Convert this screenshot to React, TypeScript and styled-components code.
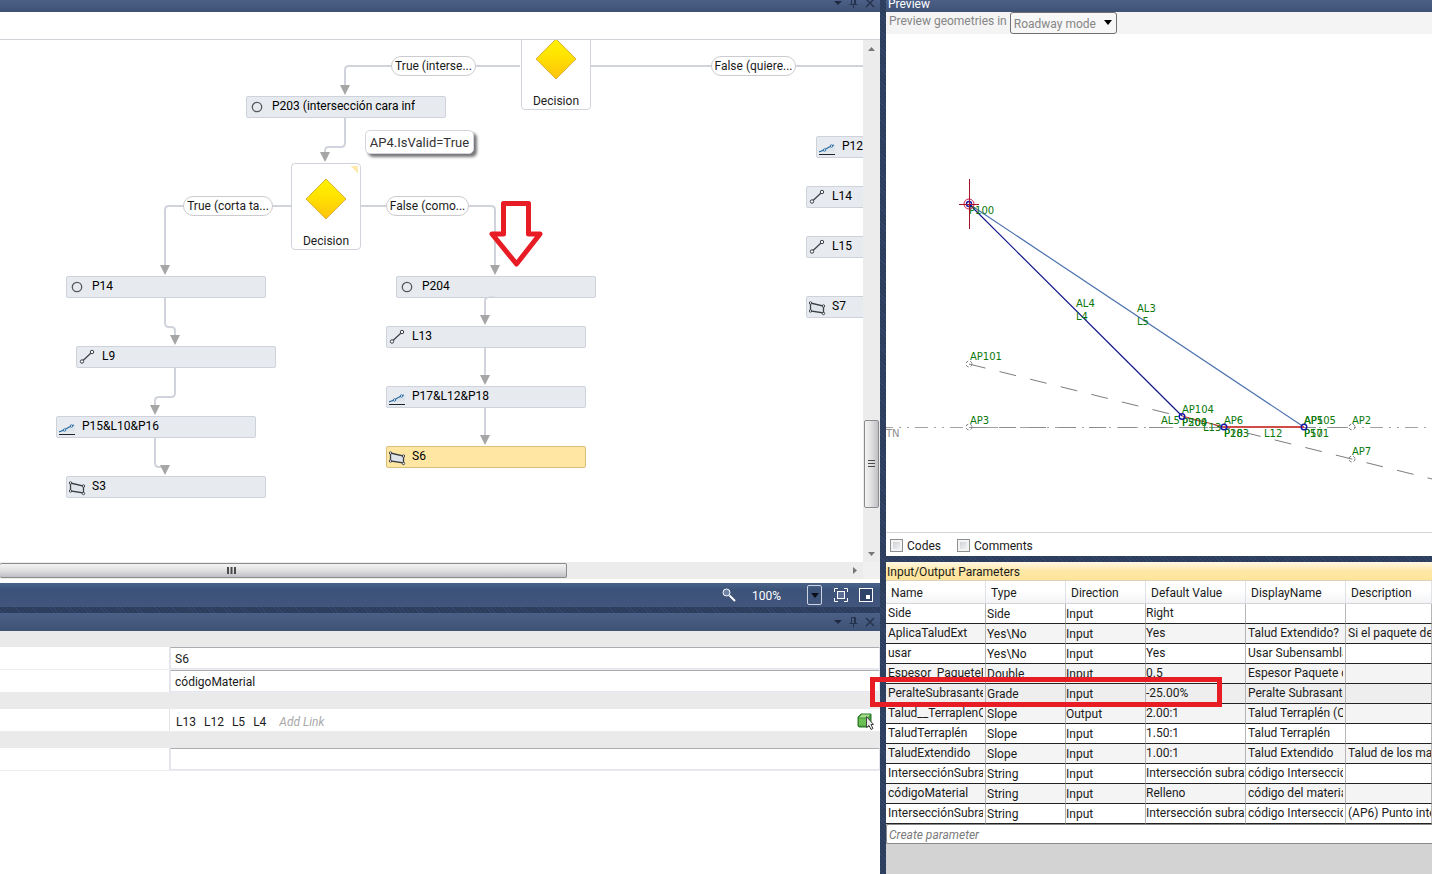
import React from "react";
import styled, { createGlobalStyle, css } from "styled-components";

const Global = createGlobalStyle`
  * { box-sizing: border-box; }
  body {
    margin: 0;
    background: #fff;
    color: #1b1b1b;
    font-family: Roboto, "Open Sans", sans-serif;
    font-size: 12px;
    line-height: 16px;
  }
  button, input, select { font: inherit; color: inherit; }
  button { border: 0; padding: 0; background: none; }
  svg { display: block; }
`;

const hatch = css`
  background: repeating-linear-gradient(45deg, #2c3d5b 0 2px, #33456a 2px 3px);
`;

const Workspace = styled.div`
  display: grid;
  grid-template-columns: minmax(0, 880fr) 6px minmax(0, 546fr);
  min-height: 100vh;
  overflow: hidden;
`;
const Column = styled.section`
  display: flex;
  flex-direction: column;
  min-width: 0;
`;
const VSplitter = styled.div`
  ${hatch}
`;
const HSplitter = styled.div`
  ${hatch}
  height: 6px;
`;

/* ---------- panel title bars ---------- */

const TitleBar = styled.header<{ $short?: boolean }>`
  display: flex;
  align-items: flex-end;
  height: ${(p) => (p.$short ? 12 : 18)}px;
  overflow: hidden;
  color: #fff;
  background: linear-gradient(#4c5f86, #3e5275);
`;
const TitleText = styled.h2`
  flex: 1;
  margin: 0;
  padding: 0 2px;
  font-size: 12px;
  line-height: 16px;
  font-weight: 400;
`;
const TitleButtons = styled.div`
  display: flex;
  align-items: center;
  gap: 4px;
  height: 18px;
  padding-right: 4px;
`;

function PanelTitle({ text = "", short, tools = true }: { text?: string; short?: boolean; tools?: boolean }) {
  return (
    <TitleBar $short={short}>
      <TitleText>{text}</TitleText>
      {tools && (
        <TitleButtons>
          <button aria-label="Window menu">
            <svg width="12" height="12"><path d="M2 4h8l-4 4z" fill="#1f2a40" /></svg>
          </button>
          <button aria-label="Pin">
            <svg width="12" height="12" fill="none" stroke="#26334e"><path d="M3.500 1.500h4v6h-4zM6.500 1.500v6M1.500 7.500h8M5.500 7.500v4" /></svg>
          </button>
          <button aria-label="Close">
            <svg width="12" height="12" fill="none" stroke="#26334e" strokeWidth="1.500"><path d="M2 2l8 8M10 2l-8 8" /></svg>
          </button>
        </TitleButtons>
      )}
    </TitleBar>
  );
}

/* ---------- flow chart ---------- */

const ToolStrip = styled.div`
  height: 28px;
  border-bottom: 1px solid #d0d3d8;
`;
const FlowArea = styled.div`
  display: flex;
  height: 522px;
`;
const Canvas = styled.div`
  position: relative;
  flex: 1;
  overflow: hidden;
  background: #fff;
`;
const Wires = styled.svg`
  position: absolute;
  inset: 0;
  width: 100%;
  height: 100%;
`;
const NodeBox = styled.div<{ $x: number; $y: number; $active?: boolean }>`
  position: absolute;
  left: ${(p) => p.$x}px;
  top: ${(p) => p.$y}px;
  display: flex;
  width: 200px;
  height: 22px;
  padding-left: 2px;
  border: 1px solid ${(p) => (p.$active ? "#d9c07a" : "#cdd2db")};
  border-radius: 2px;
  background: ${(p) => (p.$active ? "#ffe6a2" : "#e7ebef")};
  color: #000;
`;
const NodeLabel = styled.span`
  width: 143px;
  margin-left: 6px;
  line-height: 18px;
  white-space: nowrap;
  overflow: hidden;
`;
const DecisionBox = styled.div<{ $x: number; $y: number }>`
  position: absolute;
  left: ${(p) => p.$x}px;
  top: ${(p) => p.$y}px;
  display: flex;
  flex-direction: column;
  align-items: center;
  width: 70px;
  height: 87px;
  padding-top: 14px;
  border: 1px solid #d0d3da;
  border-radius: 4px;
  background: #fff;
`;
const DecisionLabel = styled.span`
  margin-top: 14px;
`;
const Notch = styled.span`
  position: absolute;
  top: 2px;
  right: 2px;
  width: 8px;
  height: 8px;
  background: linear-gradient(45deg, transparent 50%, #ffe9ac 50%);
`;
const Pill = styled.span<{ $x: number; $y: number; $w: number }>`
  position: absolute;
  left: ${(p) => p.$x}px;
  top: ${(p) => p.$y}px;
  width: ${(p) => p.$w}px;
  height: 20px;
  border: 1px solid #cbcbd0;
  border-radius: 10px;
  background: #fff;
  line-height: 18px;
  text-align: center;
  white-space: nowrap;
`;
const Tip = styled.div`
  position: absolute;
  left: 365px;
  top: 90px;
  width: 109px;
  height: 24px;
  border: 1px solid #d3d6de;
  border-radius: 5px;
  background: #fff;
  box-shadow: 3px 3px 3px #777;
  font-size: 13px;
  line-height: 24px;
  text-align: center;
  color: #333;
`;
const RedArrow = styled.svg`
  position: absolute;
  left: 486px;
  top: 159px;
`;

type Kind = "point" | "link" | "surface" | "shape";

function KindIcon({ kind }: { kind: Kind }) {
  return (
    <svg width="17" height="20" fill="none" stroke="#3b3f46">
      {kind === "point" && <circle cx="8" cy="10" r="4.700" strokeWidth="1.300" stroke="#55585d" />}
      {kind === "link" && (
        <>
          <path d="M4 13.500L12 6" strokeWidth="1.200" />
          <circle cx="3" cy="14.500" r="1.700" fill="#fff" />
          <circle cx="13" cy="5" r="1.700" fill="#fff" />
        </>
      )}
      {kind === "surface" && (
        <>
          <path d="M0 15L12 8h4v6l-8 1z" fill="#dbe4ec" stroke="none" />
          <path d="M0 15l5-2 7-4 3-1" stroke="#2b6ca3" strokeWidth="1.300" />
          <circle cx="5.500" cy="13" r="1.200" fill="#fff" stroke="#2b6ca3" />
          <circle cx="12.500" cy="9" r="1.200" fill="#fff" stroke="#2b6ca3" />
          <path d="M0 17.500h16" stroke="#20242c" />
        </>
      )}
      {kind === "shape" && (
        <>
          <path d="M1.500 6L14.500 9L14.500 16L1.500 14z" fill="#dfe3ea" strokeWidth="1.300" />
          <g fill="#fff">
            <circle cx="1.500" cy="6" r="1.200" />
            <circle cx="14.500" cy="9" r="1.200" />
            <circle cx="14.500" cy="16.500" r="1.200" />
            <circle cx="1.500" cy="14" r="1.200" />
          </g>
        </>
      )}
    </svg>
  );
}

const nodes: { x: number; y: number; kind: Kind; label: string; active?: boolean }[] = [
  { x: 246, y: 56, kind: "point", label: "P203 (intersección cara inferior)" },
  { x: 66, y: 236, kind: "point", label: "P14" },
  { x: 76, y: 306, kind: "link", label: "L9" },
  { x: 56, y: 376, kind: "surface", label: "P15&L10&P16" },
  { x: 66, y: 436, kind: "shape", label: "S3" },
  { x: 396, y: 236, kind: "point", label: "P204" },
  { x: 386, y: 286, kind: "link", label: "L13" },
  { x: 386, y: 346, kind: "surface", label: "P17&L12&P18" },
  { x: 386, y: 406, kind: "shape", label: "S6", active: true },
  { x: 816, y: 96, kind: "surface", label: "P12&L8&P13" },
  { x: 806, y: 146, kind: "link", label: "L14" },
  { x: 806, y: 196, kind: "link", label: "L15" },
  { x: 806, y: 256, kind: "shape", label: "S7" },
];

const wires = [
  "M392 26H349Q345 26 345 30V46",
  "M475 26H520",
  "M591 26H880",
  "M345 78V103Q345 107 341 107H329Q325 107 325 111V113",
  "M291 166H169Q165 166 165 170V226",
  "M361 166H491Q495 166 495 170V226",
  "M165 258V283Q165 287 169 287H171Q175 287 175 291V296",
  "M175 328V353Q175 357 171 357H159Q155 357 155 361V366",
  "M155 398V423Q155 427 159 427H162",
  "M495 257H489Q485 257 485 261V276",
  "M485 308V336",
  "M485 368V396",
];
const heads = [
  [345, 55], [325, 122], [165, 235], [495, 235], [175, 305],
  [155, 375], [165, 435], [485, 285], [485, 345], [485, 405],
];

function Decision({ x, y, noted }: { x: number; y: number; noted?: boolean }) {
  return (
    <DecisionBox $x={x} $y={y}>
      <svg width="42" height="42">
        <defs>
          <linearGradient id="gold" x1="0" y1="0" x2="0" y2="1">
            <stop offset="0" stopColor="#fff200" />
            <stop offset="0.400" stopColor="#ffe400" />
            <stop offset="1" stopColor="#ffc20e" />
          </linearGradient>
        </defs>
        <path d="M21 1L41 21L21 41L1 21z" fill="url(#gold)" stroke="#e0b13a" />
      </svg>
      <DecisionLabel>Decision</DecisionLabel>
      {noted && <Notch />}
    </DecisionBox>
  );
}

function FlowCanvas() {
  return (
    <Canvas>
      <Wires>
        <g fill="none" stroke="#d0d3dc" strokeWidth="2">
          {wires.map((d) => <path key={d} d={d} />)}
        </g>
        <g fill="#a6a6a6">
          {heads.map(([x, y]) => <path key={`${x}-${y}`} d={`M${x - 5} ${y - 10}h10l-5 10z`} />)}
        </g>
      </Wires>
      <Decision x={521} y={-17} />
      <Decision x={291} y={123} noted />
      <Pill $x={391} $y={16} $w={85}>True (interse...</Pill>
      <Pill $x={711} $y={16} $w={85}>False (quiere...</Pill>
      <Pill $x={183} $y={156} $w={90}>True (corta ta...</Pill>
      <Pill $x={386} $y={156} $w={83}>False (como...</Pill>
      {nodes.map((n) => (
        <NodeBox key={n.label} $x={n.x} $y={n.y} $active={n.active}>
          <KindIcon kind={n.kind} />
          <NodeLabel>{n.label}</NodeLabel>
        </NodeBox>
      ))}
      <Wires>
        <path d="M495 257H489Q485 257 485 261" fill="none" stroke="#cfd3da" />
      </Wires>
      <Tip>AP4.IsValid=True</Tip>
      <RedArrow width="62" height="72">
        <path d="M17.500 4.500H42.500V35H54L30.500 65L6 35H17.500z" fill="#fff" stroke="#e81c24" strokeWidth="5" strokeLinejoin="round" />
      </RedArrow>
    </Canvas>
  );
}

/* ---------- scroll bars ---------- */

const VTrack = styled.div`
  display: flex;
  flex-direction: column;
  width: 17px;
  background: #ececec;
`;
const HTrack = styled.div`
  display: flex;
  height: 17px;
  margin-bottom: 4px;
  background: #ececec;
`;
const ScrollButton = styled.button`
  display: grid;
  place-items: center;
  width: 17px;
  height: 17px;
`;
const Gap = styled.div<{ $grow: number }>`
  flex: ${(p) => p.$grow} 1 0;
`;
const Thumb = styled.div<{ $vertical?: boolean }>`
  display: grid;
  place-items: center;
  border: 1px solid #8b8b8f;
  border-radius: 2px;
  ${(p) =>
    p.$vertical
      ? css`height: 88px; margin: 0 1px; background: linear-gradient(90deg, #f3f3f3, #e2e2e3 45%, #bfc0c4);`
      : css`flex: 462 1 0; margin: 1px 0; padding-right: 104px; border-left: 0; background: linear-gradient(#f3f3f3, #e2e2e3 45%, #bfc0c4);`}
`;
const Corner = styled.div`
  width: 17px;
  background: #f0f0f0;
`;

/* ---------- zoom bar ---------- */

const ZoomBar = styled.div`
  display: flex;
  align-items: center;
  justify-content: flex-end;
  height: 24px;
  padding-right: 6px;
  color: #fff;
  background: linear-gradient(#48638a, #3c5379 30%, #42557c);
`;
const ZoomPicker = styled.label`
  position: relative;
  display: block;
  width: 70px;
  height: 22px;
  margin: 0 2px 0 16px;
`;
const ZoomSelect = styled.select`
  appearance: none;
  width: 100%;
  height: 24px;
  padding: 0;
  border: 0;
  background: transparent;
`;
const ZoomDrop = styled.span`
  position: absolute;
  top: 1px;
  right: 0;
  display: grid;
  place-items: center;
  width: 15px;
  height: 20px;
  border: 1px solid #cdd5e3;
  border-radius: 2px;
  pointer-events: none;
`;
const ZoomButton = styled.button`
  margin-left: 10px;
`;

/* ---------- property grid ---------- */

const Properties = styled.div`
  flex: 1;
`;
const Category = styled.div`
  height: 16px;
  background: #eaeaea;
`;
const PropertyRow = styled.div`
  display: flex;
  height: 23px;
  border-bottom: 1px solid #ececf0;
`;
const PropertyName = styled.div`
  width: 170px;
  border-right: 1px solid #e4e4e8;
`;
const PropertyInput = styled.input`
  flex: 1;
  min-width: 0;
  padding: 2px 4px 0;
  border: 1px solid #e3e6ee;
  border-top-color: #abadb3;
  border-radius: 1px;
  outline: 0;
`;
const LinkList = styled.div`
  display: flex;
  flex: 1;
  align-items: center;
  gap: 8px;
  padding: 4px 6px 0;
`;
const AddLink = styled.button`
  margin-left: 5px;
  color: #a9a9a9;
  font-style: italic;
`;
const PickButton = styled.button`
  margin-left: auto;
`;

/* ---------- preview ---------- */

const PreviewTools = styled.div`
  display: flex;
  gap: 3px;
  height: 22px;
  padding-left: 3px;
  background: #f4f4f4;
  color: #868686;
`;
const PreviewLabel = styled.label`
  line-height: 18px;
`;
const ModePicker = styled.span`
  position: relative;
`;
const ModeSelect = styled.select`
  appearance: none;
  width: 107px;
  height: 22px;
  padding: 1px 3px 0;
  border: 1px solid #707070;
  border-radius: 3px;
  background: #f7f7f7;
`;
const ModeArrow = styled.svg`
  position: absolute;
  top: 8px;
  right: 5px;
  pointer-events: none;
`;
const PreviewCanvas = styled.div`
  height: 498px;
  overflow: hidden;
`;
const Drawing = styled.svg`
  width: 100%;
  height: 498px;
  font-family: "DejaVu Sans", sans-serif;
  font-size: 10px;
`;
const CheckBar = styled.div`
  display: flex;
  align-items: center;
  gap: 16px;
  height: 24px;
  padding-top: 2px;
  padding-left: 4px;
  border-top: 1px solid #d3d5d8;
`;
const CheckLabel = styled.label`
  display: flex;
  align-items: center;
  gap: 4px;
`;
const Check = styled.input`
  appearance: none;
  width: 13px;
  height: 13px;
  margin: 0;
  border: 1px solid #8e8f8f;
  background: linear-gradient(135deg, #c4c9d0, #fafafa);
  box-shadow: inset 0 0 0 2px #f4f4f4;
`;

const tags: [number, number, string][] = [
  [83, 180, "P100"],
  [190, 273, "AL4"],
  [190, 286, "L4"],
  [251, 278, "AL3"],
  [251, 291, "L5"],
  [84, 326, "AP101"],
  [84, 390, "AP3"],
  [296, 379, "AP104"],
  [275, 390, "AL5"],
  [296, 392, "P204"],
  [296, 392, "P500"],
  [317, 397, "L13"],
  [338, 390, "AP6"],
  [338, 403, "P18"],
  [338, 403, "P203"],
  [378, 403, "L12"],
  [418, 390, "AP5"],
  [418, 390, "AP105"],
  [418, 403, "P17"],
  [418, 403, "P501"],
  [466, 390, "AP2"],
  [466, 421, "AP7"],
];

function PreviewDrawing() {
  return (
    <Drawing>
      <g fill="none">
        <path d="M0 393.500H1400" stroke="#a2a2a2" strokeDasharray="13 6 2 6 2 6" strokeDashoffset="6" />
        <path d="M83 393.500H466" stroke="#8c8c8c" strokeDasharray="17 13" />
        <path d="M83 330L1400 657" stroke="#7d7d7d" strokeDasharray="17 14.500" />
        <g stroke="#7d7d7d" strokeDasharray="3 2">
          <circle cx="83" cy="330" r="3" />
          <circle cx="83" cy="393" r="3" />
          <circle cx="466" cy="393" r="3" />
          <circle cx="466" cy="425" r="3" />
        </g>
        <path d="M83 170L418 393" stroke="#4a6fae" strokeWidth="1.200" />
        <path d="M83 170L296 382" stroke="#14148c" strokeWidth="1.200" />
        <path d="M296 382L338 393" stroke="#c03a30" />
        <path d="M338 393H418" stroke="#d24b4b" strokeWidth="2" />
      </g>
      <g fill="#0c780c">
        {tags.map(([x, y, t]) => <text key={`${x}-${t}`} x={x} y={y}>{t}</text>)}
      </g>
      <text x="0" y="403" fill="#8e8e8e">TN</text>
      <g fill="none" stroke="#1414a8" strokeWidth="1.400">
        <circle cx="296" cy="382.500" r="2.800" />
        <circle cx="338" cy="393" r="2.800" />
        <circle cx="418" cy="393" r="2.800" />
        <circle cx="83" cy="170" r="2.500" />
      </g>
      <g fill="none" stroke="#a81428">
        <circle cx="83" cy="170" r="5" stroke="#d0204c" />
        <path d="M83.500 145V195M73 170.500H93" />
      </g>
    </Drawing>
  );
}

/* ---------- parameters ---------- */

const Parameters = styled.div`
  position: relative;
  flex: 1;
  background: #d3d3d3;
`;
const ParametersTitle = styled.h2`
  height: 19px;
  margin: 0;
  padding: 0 1px;
  border-bottom: 1px solid #d8d2bd;
  background: linear-gradient(#fff8e4, #ffe8a6 50%, #ffe49a);
  font-size: 12px;
  line-height: 20px;
  font-weight: 400;
`;
const Clip = styled.div`
  overflow: hidden;
`;
const Table = styled.table`
  width: 100%;
  table-layout: fixed;
  border-collapse: separate;
  border-spacing: 0;
  background: #fff;
`;
const HeadCell = styled.th<{ $w?: number }>`
  width: ${(p) => (p.$w ? `${p.$w}px` : "auto")};
  height: 23px;
  padding: 2px 5px 0;
  border-right: 1px solid #dfe2e6;
  border-bottom: 1px solid #d5d5d5;
  background: linear-gradient(#fff 45%, #f3f4f6);
  font-weight: 400;
  text-align: left;
  white-space: nowrap;
`;
const Row = styled.tr<{ $shade: string }>`
  background: ${(p) => p.$shade};
`;
const Cell = styled.td<{ $pad: string }>`
  height: 20px;
  padding: ${(p) => p.$pad};
  border-right: 1px solid #b5b5b5;
  border-bottom: 1px solid #222;
`;
const CellText = styled.div`
  height: 18px;
  line-height: 18px;
  overflow: hidden;
  white-space: nowrap;
`;
const CreateInput = styled.input`
  display: block;
  width: 100%;
  height: 20px;
  padding: 2px 2px 0;
  border: 1px solid #8a8a8a;
  border-right: 0;
  border-radius: 2px 0 0 2px;
  background: #fff;
  font-style: italic;
  &::placeholder { color: #7b7b7b; opacity: 1; }
`;
const Highlight = styled.div`
  position: absolute;
  left: -16px;
  top: 115px;
  width: 352px;
  height: 30px;
  border: 5px solid #e81c24;
  pointer-events: none;
`;

const columns: { title: string; w?: number; pad: string }[] = [
  { title: "Name", w: 100, pad: "0 2px 1px 2px" },
  { title: "Type", w: 80, pad: "1px 0 0 1px" },
  { title: "Direction", w: 80, pad: "1px 0 0 0" },
  { title: "Default Value", w: 100, pad: "0 0 1px 0" },
  { title: "DisplayName", w: 100, pad: "0 2px 1px 2px" },
  { title: "Description", pad: "0 0 1px 2px" },
];
const params = [
  ["Side", "Side", "Input", "Right", "", ""],
  ["AplicaTaludExt", "Yes\\No", "Input", "Yes", "Talud Extendido?", "Si el paquete de firmes"],
  ["usar", "Yes\\No", "Input", "Yes", "Usar Subensamblaje", ""],
  ["Espesor_PaqueteFirme", "Double", "Input", "0.5", "Espesor Paquete de", ""],
  ["PeralteSubrasante", "Grade", "Input", "-25.00%", "Peralte Subrasante", ""],
  ["Talud__TerraplenOut", "Slope", "Output", "2.00:1", "Talud Terraplén (Out)", ""],
  ["TaludTerraplén", "Slope", "Input", "1.50:1", "Talud Terraplén", ""],
  ["TaludExtendido", "Slope", "Input", "1.00:1", "Talud Extendido", "Talud de los materiales"],
  ["IntersecciónSubrasante", "String", "Input", "Intersección subrasante", "código Intersección", ""],
  ["códigoMaterial", "String", "Input", "Relleno", "código del material", ""],
  ["IntersecciónSubrasante", "String", "Input", "Intersección subrasante", "código Intersección", "(AP6) Punto intersección"],
];

export default function App() {
  return (
    <>
      <Global />
      <Workspace>
        <Column>
          <PanelTitle short />
          <ToolStrip />
          <FlowArea>
            <FlowCanvas />
            <VTrack>
              <ScrollButton aria-label="Scroll up"><svg width="7" height="4"><path d="M0 4h7L3.500 0z" fill="#777" /></svg></ScrollButton>
              <Gap $grow={362} />
              <Thumb $vertical><svg width="7" height="9" stroke="#4a4a4a"><path d="M0 1.500h7M0 4.500h7M0 7.500h7" /></svg></Thumb>
              <Gap $grow={37} />
              <ScrollButton aria-label="Scroll down"><svg width="7" height="4"><path d="M0 0h7L3.500 4z" fill="#777" /></svg></ScrollButton>
            </VTrack>
          </FlowArea>
          <HTrack>
            <Thumb><svg width="9" height="7" stroke="#4a4a4a" strokeWidth="2"><path d="M1 0v7M4.500 0v7M8 0v7" /></svg></Thumb>
            <Gap $grow={279} />
            <ScrollButton aria-label="Scroll right"><svg width="4" height="7"><path d="M0 0v7L4 3.500z" fill="#777" /></svg></ScrollButton>
            <Corner />
          </HTrack>
          <ZoomBar>
            <ZoomButton aria-label="Zoom">
              <svg width="14" height="14" fill="none" stroke="#fff">
                <circle cx="4.500" cy="4.500" r="3.500" fill="#6d83a8" />
                <path d="M7.500 7.500L13 13" strokeWidth="2" />
              </svg>
            </ZoomButton>
            <ZoomPicker>
              <ZoomSelect aria-label="Zoom level"><option>100%</option></ZoomSelect>
              <ZoomDrop><svg width="8" height="5"><path d="M0 0h8L4 5z" fill="#0c0f18" /></svg></ZoomDrop>
            </ZoomPicker>
            <ZoomButton aria-label="Fit to window">
              <svg width="14" height="14" fill="none" stroke="#fff">
                <rect x="3.500" y="3.500" width="7" height="7" fill="#5b6f96" />
                <path d="M0.500 4V0.500H4M10 0.500h3.500V4M13.500 10v3.500H10M4 13.500H0.500V10" />
              </svg>
            </ZoomButton>
            <ZoomButton aria-label="Overview">
              <svg width="16" height="14">
                <rect x="1.500" y="0.500" width="13" height="13" fill="#2f4268" stroke="#fff" />
                <rect x="8" y="7" width="4" height="4" fill="#fff" />
              </svg>
            </ZoomButton>
          </ZoomBar>
          <HSplitter />
          <PanelTitle />
          <Properties>
            <Category />
            <PropertyRow><PropertyName /><PropertyInput aria-label="Name" defaultValue="S6" /></PropertyRow>
            <PropertyRow><PropertyName /><PropertyInput aria-label="Codes" defaultValue="códigoMaterial" /></PropertyRow>
            <Category />
            <PropertyRow>
              <PropertyName />
              <LinkList>
                <span>L13</span><span>L12</span><span>L5</span><span>L4</span>
                <AddLink>Add Link</AddLink>
                <PickButton aria-label="Pick links">
                  <svg width="17" height="18">
                    <path d="M1 4l3-3h10v9l-3 4H2l-1-1z" fill="#3f9a35" stroke="#2d7527" />
                    <path d="M2 4.500l3-3h8l-2 3z" fill="#a5dc8b" />
                    <path d="M2 5.500h8v7H2z" fill="#6cbf55" />
                    <path d="M9.500 3.500v11l2.500-2 2 4 2-1-2-4h2.500z" fill="#e8e8ea" stroke="#444" />
                  </svg>
                </PickButton>
              </LinkList>
            </PropertyRow>
            <Category />
            <PropertyRow><PropertyName /><PropertyInput aria-label="Comment" defaultValue="" /></PropertyRow>
          </Properties>
        </Column>

        <VSplitter />

        <Column>
          <PanelTitle short text="Preview" tools={false} />
          <PreviewTools>
            <PreviewLabel htmlFor="mode">Preview geometries in</PreviewLabel>
            <ModePicker>
              <ModeSelect id="mode"><option>Roadway mode</option></ModeSelect>
              <ModeArrow width="8" height="5"><path d="M0 0h8L4 5z" fill="#000" /></ModeArrow>
            </ModePicker>
          </PreviewTools>
          <PreviewCanvas><PreviewDrawing /></PreviewCanvas>
          <CheckBar>
            <CheckLabel><Check type="checkbox" />Codes</CheckLabel>
            <CheckLabel><Check type="checkbox" />Comments</CheckLabel>
          </CheckBar>
          <HSplitter />
          <Parameters>
            <ParametersTitle>Input/Output Parameters</ParametersTitle>
            <Clip>
              <Table>
                <thead>
                  <tr>{columns.map((c) => <HeadCell key={c.title} $w={c.w}>{c.title}</HeadCell>)}</tr>
                </thead>
                <tbody>
                  {params.map((row, r) => (
                    <Row key={r} $shade={r === 4 ? "#eeeeee" : r % 2 ? "#f4f4f4" : "#ffffff"}>
                      {row.map((text, c) => (
                        <Cell key={c} $pad={columns[c].pad}><CellText>{text}</CellText></Cell>
                      ))}
                    </Row>
                  ))}
                </tbody>
              </Table>
              <CreateInput aria-label="Create parameter" placeholder="Create parameter" />
            </Clip>
            <Highlight />
          </Parameters>
        </Column>
      </Workspace>
    </>
  );
}
